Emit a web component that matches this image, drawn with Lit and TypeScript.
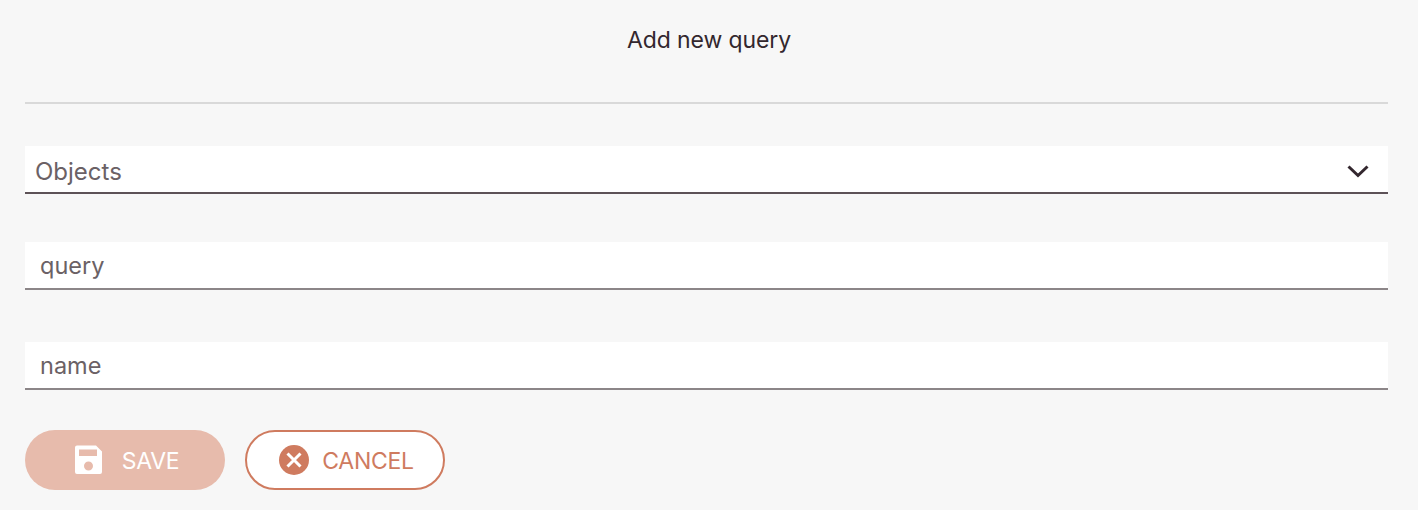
import { LitElement, html, css } from "lit";
import { customElement } from "lit/decorators.js";

@customElement("app-root")
export class AppRoot extends LitElement {
  static styles = css`
    :host {
      display: block;
      width: 1418px;
      height: 510px;
      box-sizing: border-box;
      background: #f7f7f7;
      padding: 0 30px 0 25px;
      font-family: Inter, "Liberation Sans", sans-serif;
      overflow: hidden;
    }
    .title {
      height: 80px;
      line-height: 80px;
      padding-left: 5px;
      text-align: center;
      font-size: 23px;
      letter-spacing: -0.1px;
      color: #33272e;
    }
    .divider {
      height: 2px;
      margin-top: 22px;
      background: #d9d9d9;
    }
    .field {
      box-sizing: border-box;
      background: #fff;
      display: flex;
      align-items: center;
      height: 48px;
      color: #6b6165;
    }
    .select {
      margin-top: 42px;
      padding: 4px 18px 0 10px;
      border-bottom: 2px solid #5d5257;
      justify-content: space-between;
      font-size: 24px;
    }
    .input {
      padding: 1px 15px 0;
      border-bottom: 2px solid #8c8688;
      font-size: 23.5px;
    }
    .query { margin-top: 48px; }
    .name { margin-top: 52px; }
    .chevron { width: 24px; height: 24px; display: block; }
    .actions {
      display: flex;
      gap: 20px;
      margin-top: 40px;
    }
    .btn {
      box-sizing: border-box;
      width: 200px;
      height: 60px;
      border-radius: 30px;
      display: flex;
      align-items: center;
      justify-content: center;
      font: inherit;
      font-size: 23px;
      letter-spacing: -0.3px;
      padding: 0;
    }
    .save {
      background: #e7bbac;
      border: none;
      color: #fff;
      gap: 18px;
      padding-left: 1px;
    }
    .cancel {
      background: #fff;
      border: 2px solid #cf7b5f;
      color: #cf7b5f;
      gap: 12px;
      padding-left: 2px;
    }
    .btn svg { width: 32px; height: 32px; display: block; flex: none; }
    .btn span { position: relative; top: 1px; }
  `;

  render() {
    return html`
      <div class="title">Add new query</div>
      <div class="divider"></div>
      <div class="field select">
        <span>Objects</span>
        <svg class="chevron" viewBox="0 0 24 24" fill="none" stroke="#33272e" stroke-width="3">
          <path d="M2.500 7.500 12 16.500 21.500 7.500" />
        </svg>
      </div>
      <div class="field input query">query</div>
      <div class="field input name">name</div>
      <div class="actions">
        <button class="btn save">
          <svg viewBox="0 0 32 32">
            <path
              fill="#fff"
              fill-rule="evenodd"
              d="M3 3.500A2 2 0 0 1 5 1.500H24L30 7.500V28A2 2 0 0 1 28 30H5A2 2 0 0 1 3 28ZM7 5.500V12H25V5.500ZM16.500 17.500A4.500 4.500 0 1 0 16.500 26.500 4.500 4.500 0 1 0 16.500 17.500Z"
            />
          </svg>
          <span>SAVE</span>
        </button>
        <button class="btn cancel">
          <svg viewBox="0 0 32 32">
            <circle cx="16" cy="16" r="15" fill="#cf7b5f" />
            <path d="M9.500 9.500 22.500 22.500M22.500 9.500 9.500 22.500" stroke="#fff" stroke-width="3" />
          </svg>
          <span>CANCEL</span>
        </button>
      </div>
    `;
  }
}
